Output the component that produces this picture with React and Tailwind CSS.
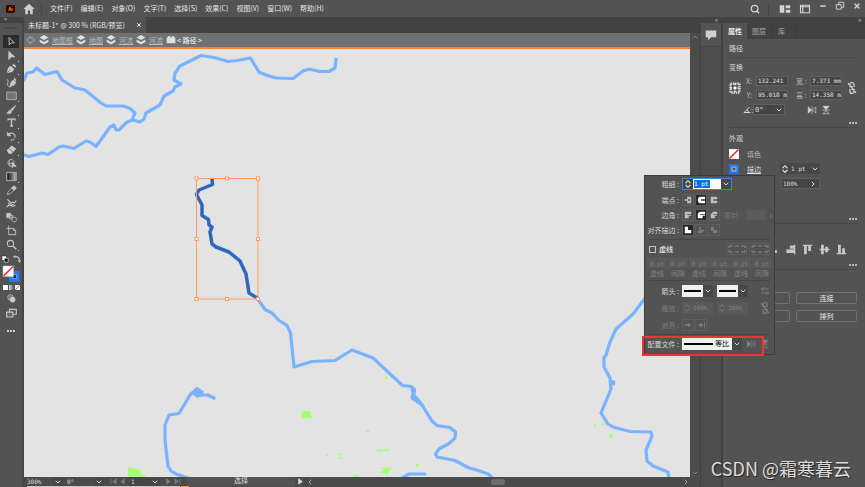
import React from "react";
import {
  ChevronDown,
  ChevronLeft,
  ChevronRight,
  ChevronUp,
  ChevronsUpDown,
  ArrowLeftRight,
  Minus,
  Search,
  X,
} from "lucide-react";

const rivers = [
  "24,80 27,73 33,72 36.5,68 45,74.5 57,71.5 62,80 75,88 85,90 101,103 106,106 123,106 130,108.5 135,113 132,120",
  "23,154.5 29,156.5 42,153 48,154.5 59,147 63,146 74,148.5 86,141 90,142 96,146.5 110,127 114,125 116,130 119,130 127,122 133,120 140,122 144,119 146,113 160,105 164,96 173,91 175,87 181,84 174,80 175,73 180,66 201,55.5 214,57.5 228,61.5 237,60.5 250.5,58 259,72 266,75 276,78 293,78.5 303,71 309,69 320,71.5 329,71.5 335,68 336,59",
  "257,298 265,309.5 272,313 279,320.5 287,325.5 290.5,333 294,367 312,361.5 335,360.5 352,350 373,358 402.5,385.5 411,386.5 414.5,389.5 412,398 422,405 432,421 437,425.5 450,427.5 455.5,432 455,438 449,443.5 439,449 435.5,454 437,457 455,460.5 469,468 480,471 488,474 494,479",
  "412,389 414,395 423,406",
  "188,478 176,474 171,471 168,466 166,449 165,440 165,425 169,415 179,413.5 190,395 197,388.5 202,392 196,392 197,396 204,395 208,395 214,398",
  "402,478 409,474 425,474",
  "646,297 633,314 616,329 610,342 606,355 604,358 604,367 610,378 611,389 601,413 608,424 613,427 630,431.5 651,432 652,436 646,450 647,461 653,466 668,472 669,479",
  "613.5,381.5 613.5,384",
];

const selected =
  "212,178 212.5,184.5 199,190 196.5,194.5 202,205 202,215.5 208.5,219.5 209,225 212,227 210,232 212,244 216,247 229,252 240,261 246,274 249,293 258,298.5";

const parks = [
  "302,411.5 310,411 312,418 301.5,418.5",
  "385,376 388,377.5 388,379 385,379",
  "366,430.5 370,430 369,432 366,432",
  "377,450 390,449 390,450.5 377,452",
  "325.5,453.5 328.5,454 328,457 326,456",
  "338,454 341,453 341,455 338,455",
  "339,457.5 343,457.5 343,459 339,459",
  "415,464 418,463.5 419,466 416,467",
  "380,468 393,467.5 393,469 389,470 388,475 380,472 384,470",
  "353,475 358,475 360,477 353,478",
  "128,467 132,468 140,469.5 141,474 145,475 145,478 128,477",
  "594,423 595.5,423 595.5,426.5 594,426.5",
  "601,424 604,422 605,424 602,426",
  "609,434.5 613,434.5 613,438 609,438",
];

const handles = [
  [196.5, 178.5], [227, 178.5], [258, 178.5],
  [196.5, 239], [258, 239],
  [196.5, 299], [227, 299], [258, 299],
];

const menus = ["文件(F)", "编辑(E)", "对象(O)", "文字(T)", "选择(S)", "效果(C)", "视图(V)", "窗口(W)", "帮助(H)"];

const tools = [
  { name: "选择", active: true, d: <path d="M4.5 2v11l3-3h4.500z" fill="none" strokeWidth="1.3" /> },
  { name: "直接选择", more: true, d: <path d="M4 2v12l3.500-4H13z" fill="currentColor" /> },
  {
    name: "钢笔",
    more: true,
    d: (
      <>
        <path d="M1 15l2-8 4-3 5 5-3 4zM9 3l2-2 4 4-2 2z" fill="currentColor" stroke="none" />
        <path d="M2 14l4-4" stroke="#535353" />
      </>
    ),
  },
  {
    name: "曲率",
    d: (
      <>
        <path d="M5 14l2-7 4-3 4 4-3 4zM11 3l1-2 3 3-1 2z" fill="currentColor" stroke="none" />
        <path d="M1 4c4 0 1 5 1 7s3 4 6 3" fill="none" strokeWidth="1.300" />
      </>
    ),
  },
  { name: "矩形", more: true, d: <path d="M1 3h14v11H1z" fill="#747474" /> },
  { name: "画笔", more: true, d: <path d="M14 2L7 8l2 2zM6 9c-3 0-2 4-5 4 3 2 7 1 7-2z" fill="currentColor" /> },
  { name: "文字工具", more: true, d: <path d="M3 5V3h10v2M8 3v10M6 13h4" fill="none" strokeWidth="2" /> },
  {
    name: "旋转",
    more: true,
    d: (
      <>
        <path d="M3 6c3-5 11-3 10 3-.500 3-3 5-6 4" fill="none" strokeWidth="1.600" strokeDasharray="15 2 2 1" />
        <path d="M2 2v5h5z" fill="currentColor" />
      </>
    ),
  },
  {
    name: "橡皮擦",
    more: true,
    d: (
      <>
        <path d="M1 9l7-7 7 5-7 7-4 0z" fill="currentColor" stroke="none" />
        <path d="M4 6l6 6" stroke="#535353" />
      </>
    ),
  },
  {
    name: "形状生成器",
    d: (
      <>
        <path d="M7 2a5 5 0 1 0 2 10M3 8h9M7 2c-3 3-3 7 0 10M7 2c3 0 5 2 5 5" fill="none" />
        <path d="M9 6v8l2-2h4z" fill="currentColor" />
      </>
    ),
  },
  {
    name: "渐变",
    more: true,
    d: (
      <>
        <path d="M1 2h14v12H1z" fill="#777" />
        <path d="M2 3h3v10H2z" fill="#222" stroke="none" />
        <path d="M5 3h3v10H5z" fill="#444" stroke="none" />
        <path d="M11 3h3v10h-3z" fill="#aaa" stroke="none" />
      </>
    ),
  },
  {
    name: "吸管",
    d: (
      <>
        <path d="M2 14l1-4 6-6 3 3-6 6z" fill="none" />
        <path d="M8 4l4-3 3 3-3 4z" fill="currentColor" />
      </>
    ),
  },
  { name: "操控变形", d: <path d="M2 2l3 3 2 3 3-2 2 1 3-3M1 13l4-3 4 2 5-1M3 7l3 4 5-2" fill="none" strokeWidth="1.600" /> },
  {
    name: "混合",
    d: (
      <>
        <path d="M1 2h6v6H1z" fill="currentColor" />
        <path d="M5 5h5v5H5z" fill="#888" />
        <circle cx="12" cy="11" r="3.500" fill="#535353" />
      </>
    ),
  },
  { name: "画板", d: <path d="M1 5h10l3 3v6H4V1M11 5v3h3" fill="none" strokeWidth="1.300" /> },
  {
    name: "缩放",
    more: true,
    d: (
      <>
        <circle cx="6.500" cy="6.500" r="4.500" fill="none" strokeWidth="1.500" />
        <path d="M10 10l5 5" strokeWidth="2" />
      </>
    ),
  },
];

function Icon({ children, className = "size-3", box = 16 }) {
  return (
    <svg viewBox={`0 0 ${box} ${box}`} className={`${className} shrink-0`} stroke="currentColor" aria-hidden="true">
      {children}
    </svg>
  );
}

function Layers() {
  return (
    <Icon className="size-2.5">
      <path d="M8 0l7 4-7 4-7-4z" fill="currentColor" stroke="none" />
      <path d="M1 7l7 4 7-4v4l-7 4-7-4z" fill="currentColor" stroke="none" />
    </Icon>
  );
}

function FlipIcon({ vertical }) {
  return (
    <Icon className={vertical ? "size-2.5 rotate-90" : "size-2.5"}>
      <path d="M2 3v10l5-5z" fill="currentColor" />
      <path d="M14 3v10L9 8z" fill="none" />
      <path d="M8 2v12" />
    </Icon>
  );
}

function BrokenLink() {
  return (
    <svg viewBox="0 0 10 14" className="h-3.5 w-2.5 shrink-0" fill="none" stroke="currentColor" strokeWidth="1.200" aria-hidden="true">
      <path d="M3 6V3.500a2 2 0 0 1 4 0V6M3 8v2.500a2 2 0 0 0 4 0V8M5 5v4M1 2l8 10" />
    </svg>
  );
}

function None({ className }) {
  return (
    <Icon className={className} box={10}>
      <path d="M0 0h10v10H0z" fill="#fff" stroke="#ccc" strokeWidth="0.500" />
      <path d="M0.500 9.500l9-9" stroke="#e8212b" strokeWidth="1.500" />
    </Icon>
  );
}

function Dots({ label }) {
  return (
    <button aria-label={label} className="flex h-2 items-center gap-px self-end">
      <i className="size-0.5 rounded-full bg-[#d4d4d4]" />
      <i className="size-0.5 rounded-full bg-[#d4d4d4]" />
      <i className="size-0.5 rounded-full bg-[#d4d4d4]" />
    </button>
  );
}

function DropButton({ label }) {
  return (
    <button aria-label={label} className="flex h-full w-2.5 shrink-0 items-center justify-center bg-[#474747]">
      <ChevronDown className="size-2" strokeWidth={3} />
    </button>
  );
}

function Field({ label, value }) {
  return (
    <label className="flex items-center gap-1">
      <span className="w-2.5 text-right whitespace-nowrap text-[#b5b5b5]">{label}</span>
      <input
        defaultValue={value}
        className="h-2.5 w-8 border border-[#606060] bg-[#454545] pl-px font-[DejaVu_Sans_Mono,Noto_Sans_CJK_SC,monospace] text-[6px] text-[#e0e0e0]"
      />
    </label>
  );
}

function MenuBar() {
  return (
    <header className="flex h-[17px] items-center bg-[#535353] pr-1">
      <span className="ml-1.5 flex h-2 w-[9px] items-center justify-center rounded-xs bg-[#310000] text-[5px] font-bold text-[#ff9a00]">
        Ai
      </span>
      <button aria-label="主页" className="ml-2 text-[#d0d0d0]">
        <Icon>
          <path d="M8 1l7.500 7H13v7H9.500v-5h-3v5H3V8H.500z" fill="currentColor" stroke="none" />
        </Icon>
      </button>
      <span className="ml-1.5 h-3 w-px bg-[#474747]" />
      <nav className="ml-2 flex gap-2">
        {menus.map((m) => (
          <button key={m} className="text-[7px] whitespace-nowrap text-[#e4e4e4]">
            {m}
          </button>
        ))}
      </nav>
      <div className="ml-auto flex items-center text-[#d4d4d4]">
        <button aria-label="搜索">
          <Search className="size-2.5" strokeWidth={3} />
        </button>
        <span className="ml-2 h-3 w-px bg-[#474747]" />
        <button aria-label="排列文档" className="ml-2.5">
          <Icon>
            <path d="M1 3h6v10H1zM9 3h6v4H9zM9 9h6v4H9z" fill="currentColor" stroke="none" />
          </Icon>
        </button>
        <button aria-label="工作区" className="ml-2">
          <Icon>
            <path d="M2 3h12v10H2zM5 3v10M2 5h12" fill="none" strokeWidth="1.500" />
          </Icon>
        </button>
        <div className="ml-2 flex gap-2 pb-1.5">
          <button aria-label="最小化">
            <Minus className="size-2" strokeWidth={4} />
          </button>
          <button aria-label="还原">
            <Icon className="size-2.5">
              <path d="M2 6h8v7H2zM6 6V2h8v8h-4" fill="none" strokeWidth="1.500" />
            </Icon>
          </button>
          <button aria-label="关闭">
            <X className="size-2" strokeWidth={4} />
          </button>
        </div>
      </div>
    </header>
  );
}

function Toolbar() {
  return (
    <aside className="flex w-6 shrink-0 flex-col items-center border-r-2 border-[#444444] bg-[#535353] text-[#c9c9c9]">
      <div className="h-1.5 w-full bg-[#424242] pl-1 text-[6px] leading-1">»</div>
      <div className="mt-1 h-0.5 w-3 bg-[#474747]" />
      <div className="mt-1.5 flex h-[216px] flex-col justify-between">
        {tools.map((t) => (
          <button
            key={t.name}
            aria-label={t.name}
            className={`relative flex h-[13px] w-4 items-center justify-center ${t.active ? "bg-[#2c2c2c]" : ""}`}
          >
            <Icon className="size-[11px]">{t.d}</Icon>
            {t.more && <i className="absolute right-0 bottom-0 size-px bg-[#d0d0d0]" />}
          </button>
        ))}
      </div>
      <div className="mt-1 flex gap-1">
        <Icon className="size-2" box={10}>
          <path d="M1 1h6v6H1z" fill="#fff" stroke="#222" />
          <path d="M4 4h5v5H4z" fill="#111" stroke="#ccc" />
        </Icon>
        <Icon className="size-2" box={10}>
          <path d="M3 2c4 0 5 2 5 5" fill="none" strokeWidth="1.500" />
          <path d="M0 2l3-2v4zM8 10L6 6.500h4z" fill="currentColor" stroke="none" />
        </Icon>
      </div>
      <Icon className="mt-0.5 size-[18px]" box={18}>
        <path d="M8.500 7.500h7.500v8H8.500z" fill="none" stroke="#1c7cff" strokeWidth="3" />
        <path d="M10.500 9.500h4v4h-4z" fill="#333" stroke="#ddd" strokeWidth="0.500" />
        <path d="M1 1h10.500v10.500H1z" fill="#fff" stroke="#ccc" strokeWidth="0.500" />
        <path d="M1.500 11l9.500-9.500" stroke="#f0202b" strokeWidth="1.500" />
      </Icon>
      <div className="mt-0.5 flex items-center gap-px">
        <i className="size-[5px] bg-white" />
        <i className="size-[5px] bg-linear-to-r from-[#ddd] to-[#555]" />
        <None className="size-[5px]" />
      </div>
      <Icon className="mt-1 size-[9px]">
        <circle cx="6" cy="6" r="5" fill="#777" />
        <circle cx="10" cy="10" r="4.500" fill="#ccc" />
      </Icon>
      <Icon className="mt-[5px] size-[11px]">
        <path d="M5 2h10v7H5z" fill="none" strokeWidth="1.500" />
        <path d="M1 6h9v7H1z" fill="#666" strokeWidth="1.500" />
      </Icon>
      <div className="mt-[11px] flex gap-px">
        <i className="size-0.5 bg-[#d0d0d0]" />
        <i className="size-0.5 bg-[#d0d0d0]" />
        <i className="size-0.5 bg-[#d0d0d0]" />
      </div>
    </aside>
  );
}

function Canvas() {
  return (
    <svg
      viewBox="24 49 666 428"
      preserveAspectRatio="xMinYMin slice"
      className="min-h-0 w-full flex-1 bg-[#e3e3e3]"
      role="img"
      aria-label="河流地图"
    >
      {parks.map((p) => (
        <polygon key={p} points={p} fill="#a5ff75" />
      ))}
      {rivers.map((r) => (
        <polyline key={r} points={r} fill="none" stroke="#79b3ff" strokeWidth="3.200" strokeLinejoin="round" strokeLinecap="round" />
      ))}
      <polygon points="412,390 416,390 415,396 424,406 411,398" fill="#79b3ff" />
      <polygon points="192,392 197,387 204,394 194,396" fill="#79b3ff" />
      <polyline points={selected} fill="none" stroke="#1a6fe0" strokeWidth="3.500" strokeLinejoin="round" />
      <polyline points={selected} fill="none" stroke="#6b5566" strokeWidth="1" />
      <rect x="196.500" y="178.500" width="61.500" height="120.500" fill="none" stroke="#ff9a62" />
      {handles.map(([x, y]) => (
        <rect key={`${x}-${y}`} x={x - 1.5} y={y - 1.5} width="3" height="3" fill="#fff" stroke="#ff9a62" />
      ))}
    </svg>
  );
}

function Breadcrumbs() {
  return (
    <div className="flex h-3.5 items-center bg-[#717171] pl-0.5 text-[7px] text-[#bdbdbd]">
      <button aria-label="后退" className="mr-[3px]">
        <Icon className="size-2.5">
          <path d="M1 8l6-6v3h3l4 3-4 3H7v3z" fill="none" strokeWidth="1.300" />
        </Icon>
      </button>
      {["地图框", "地图", "河流", "河流"].map((b, i) => (
        <a key={i} href="#layer" className="mr-[3px] flex items-center gap-[3px] whitespace-nowrap">
          <span className="text-[#e0e0e0]">
            <Layers />
          </span>
          <span className="underline underline-offset-1">{b}</span>
        </a>
      ))}
      <Icon className="size-2.5 text-[#e0e0e0]">
        <path d="M1 4h2V2h4v2h2V2h4v2h2v9H1z" fill="currentColor" stroke="none" />
      </Icon>
      <span className="ml-px whitespace-nowrap text-white">&lt; 路径 &gt;</span>
    </div>
  );
}

function StatusBar() {
  return (
    <>
      <footer className="flex h-[9px] items-center bg-[#4b4b4b] font-[DejaVu_Sans_Mono,Noto_Sans_CJK_SC,monospace] text-[6px] leading-none text-[#dcdcdc]">
        <div className="flex h-full w-[39px] items-center justify-between pl-[3px]">
          <input aria-label="缩放比例" defaultValue="300%" className="w-5 leading-none" />
          <DropButton label="缩放比例列表" />
        </div>
        <div className="flex h-full w-[41px] items-center justify-between pl-1">
          <input aria-label="旋转视图" defaultValue="0°" className="w-4 leading-none" />
          <DropButton label="旋转视图列表" />
        </div>
        <div className="ml-1.5 flex items-center gap-0.5 text-[#7a7a7a]">
          <button aria-label="首项"><Icon className="size-[7px]" box={8}><path d="M1 1v6M7 1v6L3 4z" fill="currentColor" /></Icon></button>
          <button aria-label="上一项"><Icon className="size-[7px]" box={8}><path d="M6 1v6L2 4z" fill="currentColor" /></Icon></button>
        </div>
        <div className="ml-1 flex h-full w-[30px] items-center justify-between bg-[#454545] pl-px">
          <input aria-label="画板导航" defaultValue="1" className="w-3 leading-none" />
          <DropButton label="画板列表" />
        </div>
        <div className="ml-[5px] flex items-center gap-0.5 text-[#7a7a7a]">
          <button aria-label="下一项"><Icon className="size-[7px]" box={8}><path d="M2 1v6l4-3z" fill="currentColor" /></Icon></button>
          <button aria-label="末项"><Icon className="size-[7px]" box={8}><path d="M7 1v6M1 1v6l4-3z" fill="currentColor" /></Icon></button>
        </div>
        <div className="ml-1.5 flex h-full w-[108px] items-center justify-center bg-[#535353] text-[7px]">选择</div>
        <button aria-label="状态菜单" className="ml-0.5">
          <Icon className="size-[7px]" box={8}><path d="M2 1v6l4-3z" fill="currentColor" /></Icon>
        </button>
        <button aria-label="向左滚动" className="ml-0.5">
          <ChevronLeft className="size-2" />
        </button>
        <div className="flex h-full flex-1 items-center justify-center">
          <i className="h-1.5 w-3.5 rounded-full bg-[#6c6c6c]" />
        </div>
        <button aria-label="向右滚动" className="mr-2.5">
          <ChevronRight className="size-2" />
        </button>
      </footer>
      <div className="flex h-px shrink-0 gap-px bg-[#4b4b4b] pl-[3px]">
        <i className="w-[153px] bg-[#c8c8c8]" />
        <i className="w-2 bg-[#f0962d]" />
      </div>
    </>
  );
}

function Document() {
  return (
    <main className="flex min-w-0 flex-1 flex-col">
      <div className="flex h-4 bg-[#424242]">
        <div className="flex w-[122px] items-center justify-between bg-[#535353] pr-1 pl-1 text-[#e6e6e6]">
          <span className="text-[7px] whitespace-nowrap">未标题-1* @ 300 % (RGB/预览)</span>
          <button aria-label="关闭文档">
            <X className="size-1.5" strokeWidth={4} />
          </button>
        </div>
      </div>
      <div className="flex min-h-0 flex-1">
        <div className="flex min-w-0 flex-1 flex-col">
          <Breadcrumbs />
          <div className="h-0.5 shrink-0 bg-[#f58433]" />
          <Canvas />
        </div>
        <div className="flex w-2.5 shrink-0 flex-col items-center justify-between bg-[#4b4b4b] text-[#a8a8a8]">
          <button aria-label="向上滚动"><ChevronUp className="size-2" /></button>
          <button aria-label="向下滚动"><ChevronDown className="size-2" /></button>
        </div>
      </div>
      <StatusBar />
    </main>
  );
}

function AlignIcon({ kind }) {
  const d = {
    left: "M2 1h2v14H2zM5 3h5v4H5zM5 9h8v4H5z",
    right: "M13 1h2v14h-2zM7 2h6v5H7zM2 8h11v5H2z",
    top: "M1 1h14v2H1zM3 3h4v12H3zM9 3h4v7H9z",
    middle: "M1 7h14v2H1zM3 1h4v14H3zM9 4h4v8H9z",
    bottom: "M1 13h14v2H1zM3 1h4v12H3zM9 6h4v7H9z",
  }[kind];
  return (
    <Icon className="size-[11px]">
      <path d={d} fill="currentColor" stroke="none" />
    </Icon>
  );
}

function Properties() {
  return (
    <section className="flex w-[142px] shrink-0 flex-col bg-[#535353] text-[7px] leading-[10px] text-[#dcdcdc]">
      <div role="tablist" className="flex h-4 bg-[#424242] text-[#a8a8a8]">
        <button role="tab" aria-selected="true" className="w-6 bg-[#535353] font-bold text-[#eeeeee]">属性</button>
        <button role="tab" aria-selected="false" className="w-[25px] border-r border-[#3a3a3a]">图层</button>
        <button role="tab" aria-selected="false" className="w-6 border-r border-[#3a3a3a] pr-1">库</button>
      </div>
      <div className="flex flex-col pr-2 pl-1.5">
        <h2 className="flex h-[19px] items-center border-b border-[#4a4a4a]">路径</h2>
        <div className="flex h-[70px] flex-col border-b border-[#474747] pt-1">
          <h2>变换</h2>
          <div className="mt-1 flex items-center">
            <Icon className="size-3">
              <path d="M2 2h12v12H2zM2 8h12M8 2v12" fill="none" strokeDasharray="2 1" strokeWidth="3" />
              <path d="M5.500 5.500h5v5h-5z" fill="#fff" stroke="#333" />
            </Icon>
            <div className="ml-px flex flex-col gap-1">
              <Field label="X:" value="132.241" />
              <Field label="Y:" value="95.018 mm" />
            </div>
            <div className="ml-2 flex flex-col gap-1">
              <Field label="宽 :" value="7.373 mm" />
              <Field label="高 :" value="14.358 mm" />
            </div>
            <button aria-label="约束宽度和高度比例" className="ml-auto shrink-0">
              <BrokenLink />
            </button>
          </div>
          <div className="mt-1 flex items-center pl-3.5">
            <Icon className="size-2"><path d="M13 2L2 13h12M8 8c2 1 3 3 3 5" fill="none" strokeWidth="2" /></Icon>
            <span>:</span>
            <div className="flex h-[11px] border border-[#606060] bg-[#454545]">
              <input aria-label="旋转角度" defaultValue="0°" className="w-5 pl-px font-[DejaVu_Sans_Mono,monospace]" />
              <DropButton label="旋转角度列表" />
            </div>
            <button aria-label="水平翻转" className="ml-[22px]"><FlipIcon /></button>
            <button aria-label="垂直翻转" className="ml-1"><FlipIcon vertical /></button>
          </div>
          <div className="mt-1 flex justify-end"><Dots label="变换更多选项" /></div>
        </div>
        <div className="flex h-24 flex-col border-b border-[#474747] pt-[5px]">
          <h2>外观</h2>
          <div className="mt-[3px] flex h-4 items-center gap-2">
            <button aria-label="填色颜色"><None className="size-2.5" /></button>
            <span className="text-[#b8b8b8]">填色</span>
          </div>
          <div className="flex h-4 items-center">
            <button aria-label="描边颜色">
              <Icon className="size-2.5" box={10}>
                <path d="M1.500 1.500h7v7h-7z" fill="#333" stroke="#1c7cff" strokeWidth="2.500" />
                <path d="M3 3h4v4H3z" fill="#535353" stroke="#eee" strokeWidth="0.700" />
              </Icon>
            </button>
            <a href="#stroke" className="ml-2 underline">描边</a>
            <div className="ml-[19px] flex h-[11px] items-center bg-[#474747] font-[DejaVu_Sans_Mono,monospace] text-[6px]">
              <ChevronsUpDown className="size-2.5" strokeWidth={3} />
              <input aria-label="描边粗细" defaultValue="1 pt" className="w-5 pl-px" />
              <DropButton label="描边粗细列表" />
            </div>
          </div>
          <div className="flex h-4 items-center justify-end pr-[37px]">
            <div className="flex h-[11px] items-center border border-[#606060] bg-[#454545] font-[DejaVu_Sans_Mono,monospace] text-[6px]">
              <input aria-label="不透明度" defaultValue="100%" className="w-[27px] pl-px" />
              <button aria-label="不透明度滑块" className="w-2.5"><ChevronRight className="size-2" strokeWidth={3} /></button>
            </div>
          </div>
          <div className="mt-6 flex justify-end"><Dots label="外观更多选项" /></div>
        </div>
        <div className="flex h-[46px] flex-col border-b border-[#474747] pt-5">
          <div className="flex items-center justify-end gap-1.5 pr-2.5 text-[#c8c8c8]">
            {["left", "right", "top", "middle", "bottom"].map((k) => (
              <button key={k} aria-label={`对齐 ${k}`}><AlignIcon kind={k} /></button>
            ))}
          </div>
          <div className="mt-1.5 flex justify-end"><Dots label="对齐更多选项" /></div>
        </div>
        <div className="mt-[22px] grid grid-cols-2 gap-1.5 text-[#eeeeee]">
          <button aria-label="快速操作一" className="h-3 rounded-xs border border-[#707070]" />
          <button className="h-3 rounded-xs border border-[#707070] leading-none">连接</button>
          <button aria-label="快速操作二" className="h-3 rounded-xs border border-[#707070]" />
          <button className="h-3 rounded-xs border border-[#707070] leading-none">排列</button>
        </div>
      </div>
    </section>
  );
}

function IconChoice({ items, active, disabled }) {
  return (
    <div className="flex gap-px">
      {items.map(([name, d], i) => (
        <button
          key={name}
          aria-label={name}
          className={`flex h-3 w-3 items-center justify-center border border-[#5e5e5e] ${i === active ? "bg-[#272727] text-white" : disabled ? "text-[#7a7a7a]" : "text-[#c0c0c0]"}`}
        >
          <Icon className="size-2" box={10}>
            <path d={d} fill="currentColor" fillRule="evenodd" stroke="none" />
          </Icon>
        </button>
      ))}
    </div>
  );
}

function Row({ label, dim, className, children }) {
  return (
    <div className={`flex items-center ${className}`}>
      <span className={`w-[34px] shrink-0 text-right whitespace-nowrap ${dim ? "text-[#808080]" : ""}`}>{label} :</span>
      <div className="flex flex-1 items-center pl-[3px]">{children}</div>
    </div>
  );
}

function Arrowhead({ label }) {
  return (
    <div className="flex h-3">
      <div className="flex w-[21px] items-center bg-[#f0f0f0] px-0.5"><i className="h-0.5 w-full bg-black" /></div>
      <DropButton label={label} />
    </div>
  );
}

function ScaleField({ label }) {
  return (
    <div className="flex h-3 items-center bg-[#595959] text-[#858585]">
      <ChevronsUpDown className="size-2.5" />
      <input aria-label={label} disabled defaultValue="100%" className="w-[21px] pl-px font-[DejaVu_Sans_Mono,monospace] text-[6px]" />
    </div>
  );
}

function StrokePanel() {
  return (
    <div className="absolute top-[175px] right-[90px] w-[131px] border border-[#3c3c3c] bg-[#535353] pb-0.5 text-[7px] leading-[10px] text-[#d4d4d4]">
      <Row label="粗细" className="h-4">
        <div className="flex h-3 items-center border border-[#3f86d2] bg-[#454545]">
          <ChevronsUpDown className="size-2.5" strokeWidth={3} />
          <div className="flex h-full w-7 items-center bg-white pl-px">
            <input aria-label="粗细" defaultValue="1 pt" className="h-2 w-4 bg-[#0a73d8] font-[DejaVu_Sans_Mono,monospace] text-[6px] text-white" />
          </div>
          <DropButton label="粗细列表" />
        </div>
      </Row>
      <Row label="端点" className="h-[15px]">
        <IconChoice
          active={1}
          items={[
            ["平头端点", "M4 1h5v8H4V6H1V4h3zM5 4v2h3V4z"],
            ["圆头端点", "M5 1h5v3H5v2h5v3H5a4 4 0 0 1 0-8z"],
            ["方头端点", "M1 1h8v8H1zM4 4v2h5V4z"],
          ]}
        />
      </Row>
      <Row label="边角" className="h-[15px]">
        <IconChoice
          active={1}
          items={[
            ["斜接连接", "M1 1h8v5H6v3H1zM4 4v1h5V4z"],
            ["圆角连接", "M5 1h5v5H7v3H1V5a4 4 0 0 1 4-4zM4 4v1h6V4z"],
            ["斜角连接", "M4 1h5v5H6v3H1V4zM4 4v1h5V4z"],
          ]}
        />
        <label className="ml-1 flex items-center gap-1 whitespace-nowrap text-[#757575]">
          限制 :
          <input disabled className="h-2.5 w-5 bg-[#5a5a5a]" />
          <span>x</span>
        </label>
      </Row>
      <Row label="对齐描边" className="h-[15px]">
        <IconChoice
          active={0}
          disabled
          items={[
            ["居中对齐", "M1 1h4v4h4v4H1z"],
            ["内侧对齐", "M3 1h2v4h4v2H6v2H1V6h2z"],
            ["外侧对齐", "M1 1h4v4h4v4H4V6H1z"],
          ]}
        />
      </Row>
      <div className="mx-1 mt-0.5 flex h-[19px] items-center border-t border-[#474747]">
        <label className="flex items-center gap-[3px] font-bold">
          <input type="checkbox" className="size-[7px] appearance-none border border-[#c4c4c4]" />
          虚线
        </label>
        <div className="ml-auto flex gap-0.5 text-[#8a8a8a]">
          {["保留虚线长度", "对齐虚线边角"].map((n) => (
            <button key={n} aria-label={n} className="flex h-3 w-[21px] items-center justify-center border border-[#5e5e5e]">
              <svg viewBox="0 0 18 8" className="h-2 w-[18px]" fill="none" stroke="currentColor">
                <path d="M1 3V1h4M7 1h4M13 1h4v2M17 5v2h-4M11 7H7M5 7H1V5" />
              </svg>
            </button>
          ))}
        </div>
      </div>
      <div className="mx-0.5 grid grid-cols-6 gap-px pb-0.5 text-center text-[#808080]">
        {["虚线", "间隙", "虚线", "间隙", "虚线", "间隙"].map((n, i) => (
          <label key={i} className="flex flex-col items-center">
            <input
              disabled
              defaultValue="0 pt"
              className="h-2.5 w-full bg-[#5a5a5a] text-center font-[DejaVu_Sans_Mono,monospace] text-[6px] leading-none"
            />
            {n}
          </label>
        ))}
      </div>
      <div className="mx-1 border-t border-[#474747]" />
      <Row label="箭头" className="h-[19px]">
        <Arrowhead label="起点箭头" />
        <span className="w-1" />
        <Arrowhead label="终点箭头" />
        <ArrowLeftRight className="ml-3 size-2.5 text-[#858585]" />
      </Row>
      <Row label="缩放" dim className="h-4">
        <ScaleField label="起点缩放" />
        <span className="w-1" />
        <ScaleField label="终点缩放" />
        <span className="ml-3 text-[#858585]"><BrokenLink /></span>
      </Row>
      <Row label="对齐" dim className="h-[18px]">
        <IconChoice
          disabled
          active={-1}
          items={[
            ["箭头超出终点", "M1 4h4V2l4 3-4 3V6H1z"],
            ["箭头位于终点", "M1 4h3V2l4 3-4 3V6H1zM9 1h1v8H9z"],
          ]}
        />
      </Row>
      <div className="mx-1 border-t border-[#474747]" />
      <Row label="配置文件" className="h-[17px]">
        <div className="flex h-3">
          <div className="flex w-[50px] items-center gap-0.5 bg-[#f0f0f0] px-0.5 text-black">
            <i className="h-0.5 flex-1 bg-black" />
            <select aria-label="配置文件" className="w-[15px] appearance-none p-0 text-[7px] leading-none">
              <option>等比</option>
            </select>
          </div>
          <DropButton label="配置文件列表" />
        </div>
        <div className="ml-1 flex gap-1 text-[#858585]">
          <button aria-label="纵向翻转"><FlipIcon /></button>
          <button aria-label="横向翻转"><FlipIcon vertical /></button>
        </div>
      </Row>
    </div>
  );
}

export default function App() {
  return (
    <div className="relative flex h-screen w-full flex-col overflow-hidden bg-[#535353] font-['Noto_Sans_CJK_SC',sans-serif] leading-none">
      <MenuBar />
      <div className="flex min-h-0 flex-1">
        <Toolbar />
        <Document />
        <div className="flex shrink-0 flex-col border-l border-[#424242]">
          <div className="flex h-1.5 items-center justify-between bg-[#424242] pr-1 pl-3.5 text-[6px] leading-1 text-[#d0d0d0]">
            <span>«</span>
            <span>»</span>
          </div>
          <div className="flex min-h-0 flex-1">
            <div className="w-[22px] shrink-0 border-r-2 border-[#424242] bg-[#4d4d4d]">
              <button aria-label="注释" className="flex h-6 w-full items-center justify-center border-b border-[#424242] bg-[#535353] text-[#d0d0d0]">
                <Icon>
                  <path d="M1 2h14v9H8l-4 4v-4H1z" fill="currentColor" stroke="none" />
                </Icon>
              </button>
            </div>
            <Properties />
          </div>
        </div>
      </div>
      <StrokePanel />
      <div className="pointer-events-none absolute top-[336px] right-[101px] h-5 w-[122px] border-2 border-[#ee3535]" />
      <p className="pointer-events-none absolute right-3.5 bottom-2 text-[18px] leading-[22px] whitespace-nowrap text-[#dcdcdc] [text-shadow:1px_1px_1px_#222]">
        CSDN @霜寒暮云
      </p>
    </div>
  );
}
